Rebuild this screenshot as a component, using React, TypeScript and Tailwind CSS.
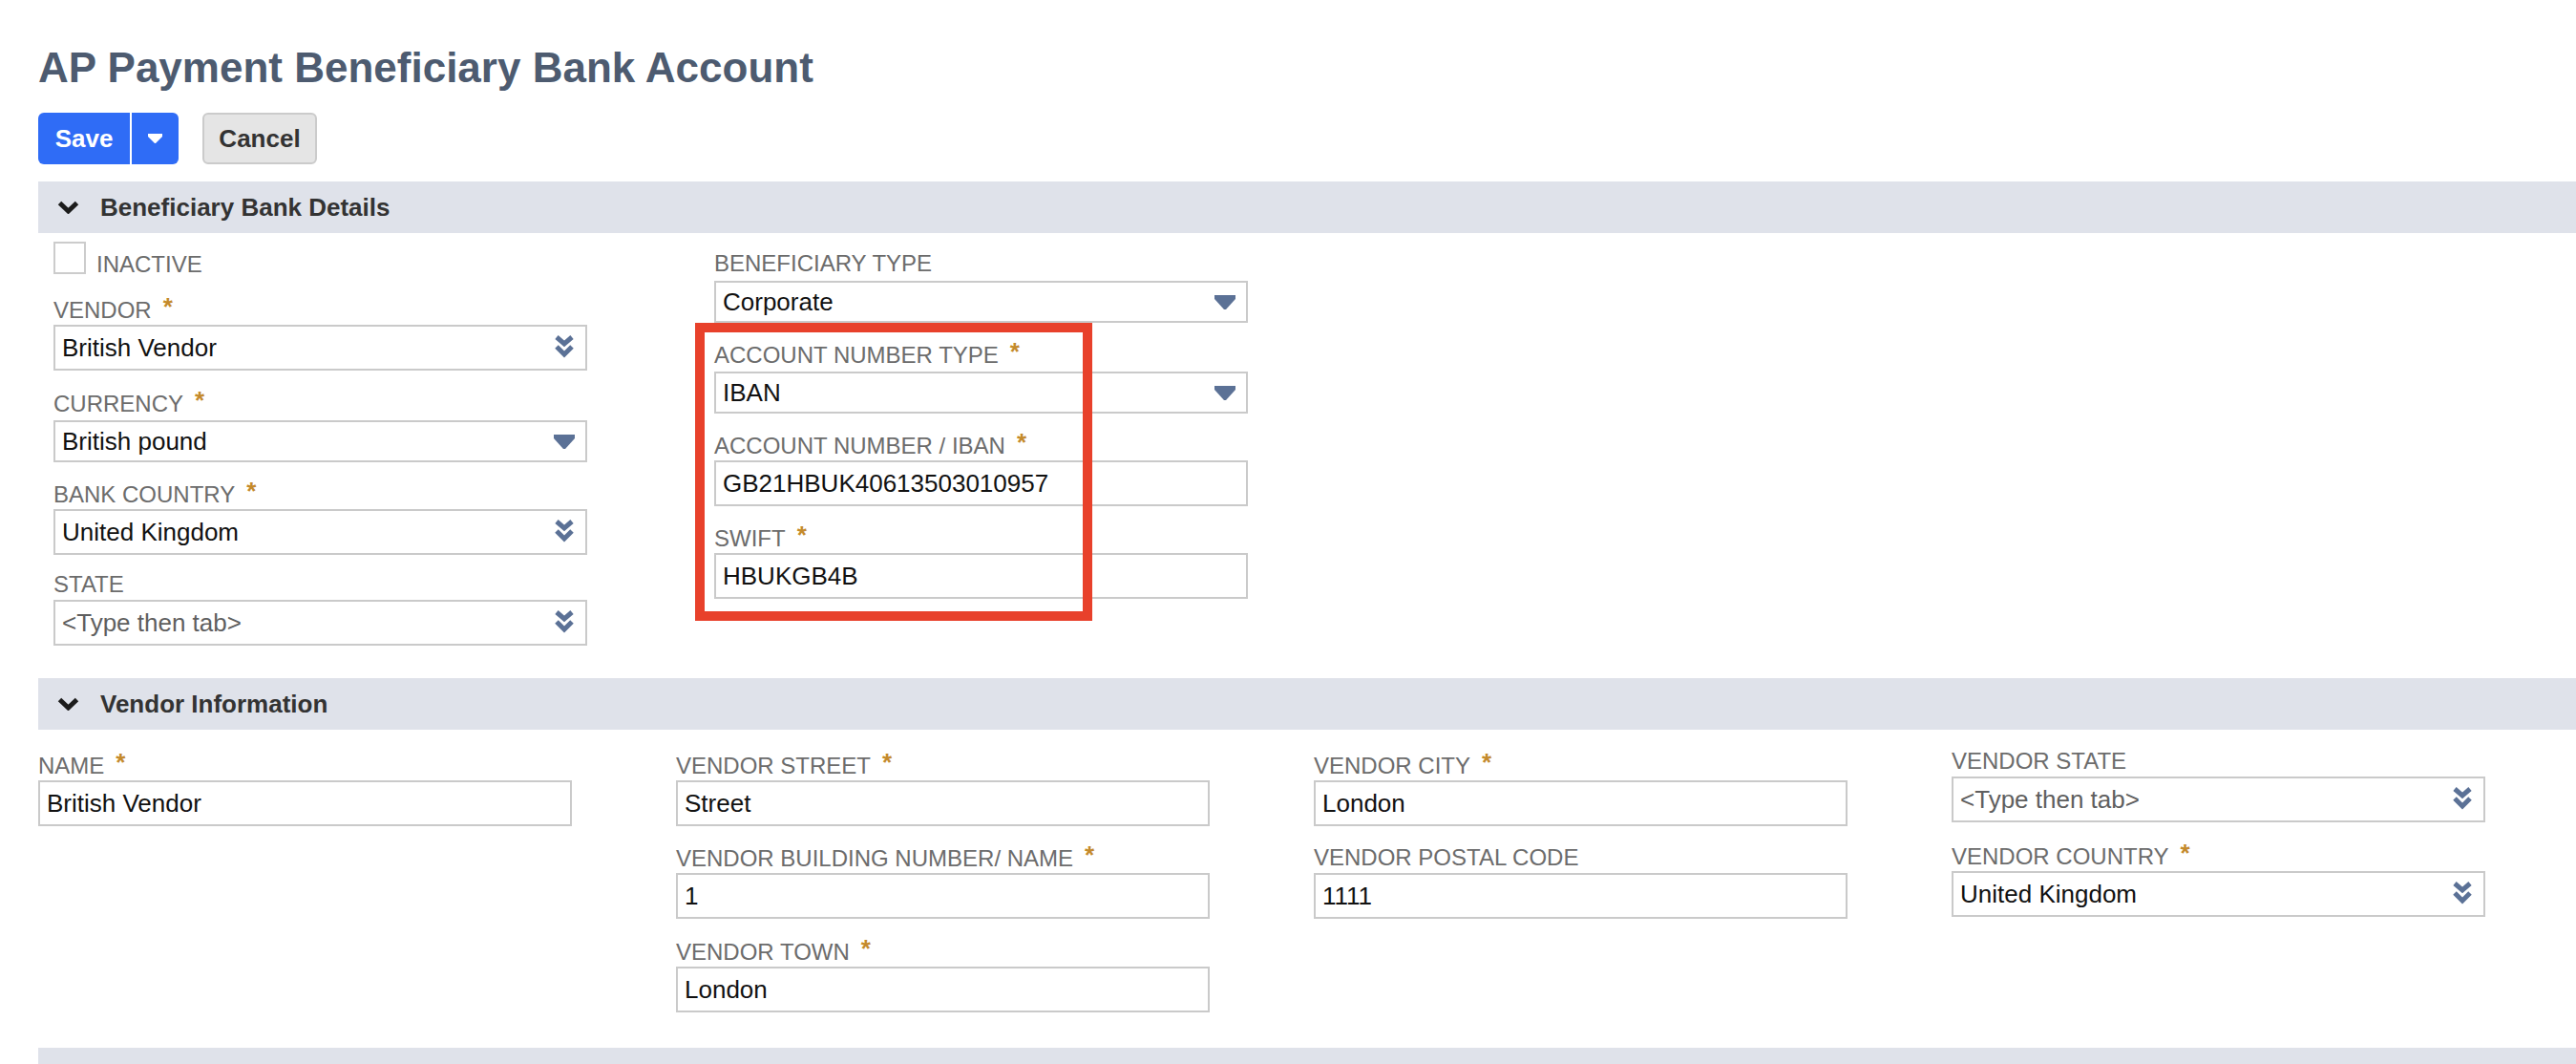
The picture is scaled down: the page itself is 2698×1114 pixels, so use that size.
import React from "react";

function Req() {
  return (
    <span className="relative -top-[3px] ml-[12px] text-[26px] font-bold text-[#c48a2c]">
      *
    </span>
  );
}

function Label({ text, req }: { text: string; req?: boolean }) {
  return (
    <div className="h-[28px] whitespace-nowrap text-[24px] leading-[28px] text-[#6c6c6c]">
      {text}
      {req && <Req />}
    </div>
  );
}

function DoubleChevron() {
  return (
    <svg width="22" height="26" viewBox="0 0 22 26" fill="none">
      <path d="M3 2 L11 9 L19 2" stroke="#5b7196" strokeWidth="5" />
      <path d="M3 12 L11 20 L19 12" stroke="#5b7196" strokeWidth="5" />
    </svg>
  );
}

function DropArrow() {
  return (
    <svg width="24" height="15" viewBox="0 0 24 15">
      <polygon points="1,0 23,0 23,4 13,15 11,15 1,4" fill="#5b7196" />
    </svg>
  );
}

// plain text input
function TextBox({ value }: { value: string }) {
  return (
    <div className="flex h-[48px] items-center border-2 border-[#cacaca] bg-white pl-[7px] text-[26px] text-[#111]">
      {value}
    </div>
  );
}

// autocomplete field with the double chevron
function AutoBox({ value, placeholder }: { value?: string; placeholder?: string }) {
  return (
    <div className="flex h-[48px] items-center justify-between border-2 border-[#cacaca] bg-white pl-[7px] pr-[11px] text-[26px]">
      {value ? (
        <span className="text-[#111]">{value}</span>
      ) : (
        <span className="text-[#5f5f5f]">{placeholder}</span>
      )}
      <DoubleChevron />
    </div>
  );
}

// select with the single triangle
function SelectBox({ value }: { value: string }) {
  return (
    <div className="h-[48px] py-[2px]">
      <div className="flex h-full items-center justify-between border-2 border-[#cacaca] bg-white pl-[7px] pr-[10px] text-[26px] text-[#111]">
        <span>{value}</span>
        <DropArrow />
      </div>
    </div>
  );
}

function Field({
  label,
  req,
  children,
  className = "",
}: {
  label: string;
  req?: boolean;
  children: React.ReactNode;
  className?: string;
}) {
  return (
    <div className={className}>
      <Label text={label} req={req} />
      <div className="mt-[2px]">{children}</div>
    </div>
  );
}

function SectionHeader({ title, className = "" }: { title: string; className?: string }) {
  return (
    <div className={`flex h-[54px] items-center bg-[#dfe2ea] ${className}`}>
      <svg width="23" height="14" viewBox="0 0 23 14" className="ml-[20px]" fill="none">
        <path d="M2.5 2.5 L11.5 11 L20.5 2.5" stroke="#1c1c1c" strokeWidth="5" />
      </svg>
      <span className="ml-[22px] text-[26px] font-bold text-[#333]">{title}</span>
    </div>
  );
}

export default function App() {
  return (
    <div className="min-h-screen bg-white pl-[40px] pt-[45px] font-['Liberation_Sans',Arial,sans-serif]">
      <h1 className="text-[44px] font-bold leading-[52px] text-[#4d5b70]">
        AP Payment Beneficiary Bank Account
      </h1>

      {/* Buttons */}
      <div className="mt-[21px] flex gap-[25px]">
        <div className="flex h-[54px] overflow-hidden rounded-[6px] bg-[#2f6cf6] text-white">
          <button className="w-[96px] text-[26px] font-bold">Save</button>
          <div className="w-[2px] bg-white" />
          <button className="flex w-[49px] items-center justify-center">
            <svg width="15" height="10" viewBox="0 0 15 10">
              <polygon points="0,0 15,0 15,3 8,10 7,10 0,3" fill="#ffffff" />
            </svg>
          </button>
        </div>
        <button className="h-[54px] w-[120px] rounded-[6px] border-2 border-[#cbcbcb] bg-[#e5e5e5] text-[26px] font-bold text-[#333]">
          Cancel
        </button>
      </div>

      {/* Beneficiary Bank Details */}
      <SectionHeader title="Beneficiary Bank Details" className="mt-[18px]" />
      <div className="relative flex gap-[133px] pl-[16px] pt-[9px]">
        <div className="w-[559px]">
          <div className="flex items-start">
            <div className="h-[34px] w-[34px] border-2 border-[#cccccc] bg-white" />
            <span className="ml-[11px] mt-[10px] text-[24px] leading-[28px] text-[#6c6c6c]">INACTIVE</span>
          </div>
          <Field label="VENDOR" req className="mt-[19px]">
            <AutoBox value="British Vendor" />
          </Field>
          <Field label="CURRENCY" req className="mt-[20px]">
            <SelectBox value="British pound" />
          </Field>
          <Field label="BANK COUNTRY" req className="mt-[17px]">
            <AutoBox value="United Kingdom" />
          </Field>
          <Field label="STATE" className="mt-[17px]">
            <AutoBox placeholder="<Type then tab>" />
          </Field>
        </div>

        <div className="w-[559px] pt-[9px]">
          <Field label="BENEFICIARY TYPE">
            <SelectBox value="Corporate" />
          </Field>
          <Field label="ACCOUNT NUMBER TYPE" req className="mt-[17px]">
            <SelectBox value="IBAN" />
          </Field>
          <Field label="ACCOUNT NUMBER / IBAN" req className="mt-[17px]">
            <TextBox value="GB21HBUK40613503010957" />
          </Field>
          <Field label="SWIFT" req className="mt-[19px]">
            <TextBox value="HBUKGB4B" />
          </Field>
        </div>

        {/* highlight annotation */}
        <div className="pointer-events-none absolute left-[688px] top-[94px] h-[312px] w-[416px] border-[10px] border-[#e8412b]" />
      </div>

      {/* Vendor Information */}
      <SectionHeader title="Vendor Information" className="mt-[34px]" />
      <div className="flex gap-[109px] pt-[23px]">
        <div className="w-[559px]">
          <Field label="NAME" req>
            <TextBox value="British Vendor" />
          </Field>
        </div>
        <div className="w-[559px]">
          <Field label="VENDOR STREET" req>
            <TextBox value="Street" />
          </Field>
          <Field label="VENDOR BUILDING NUMBER/ NAME" req className="mt-[19px]">
            <TextBox value="1" />
          </Field>
          <Field label="VENDOR TOWN" req className="mt-[20px]">
            <TextBox value="London" />
          </Field>
        </div>
        <div className="w-[559px]">
          <Field label="VENDOR CITY" req>
            <TextBox value="London" />
          </Field>
          <Field label="VENDOR POSTAL CODE" className="mt-[19px]">
            <TextBox value="1111" />
          </Field>
        </div>
        <div className="w-[559px]">
          <Field label="VENDOR STATE" className="-mt-[4px]">
            <AutoBox placeholder="<Type then tab>" />
          </Field>
          <Field label="VENDOR COUNTRY" req className="mt-[21px]">
            <AutoBox value="United Kingdom" />
          </Field>
        </div>
      </div>

      <div className="mt-[37px] h-[54px] bg-[#dfe2ea]" />
    </div>
  );
}
